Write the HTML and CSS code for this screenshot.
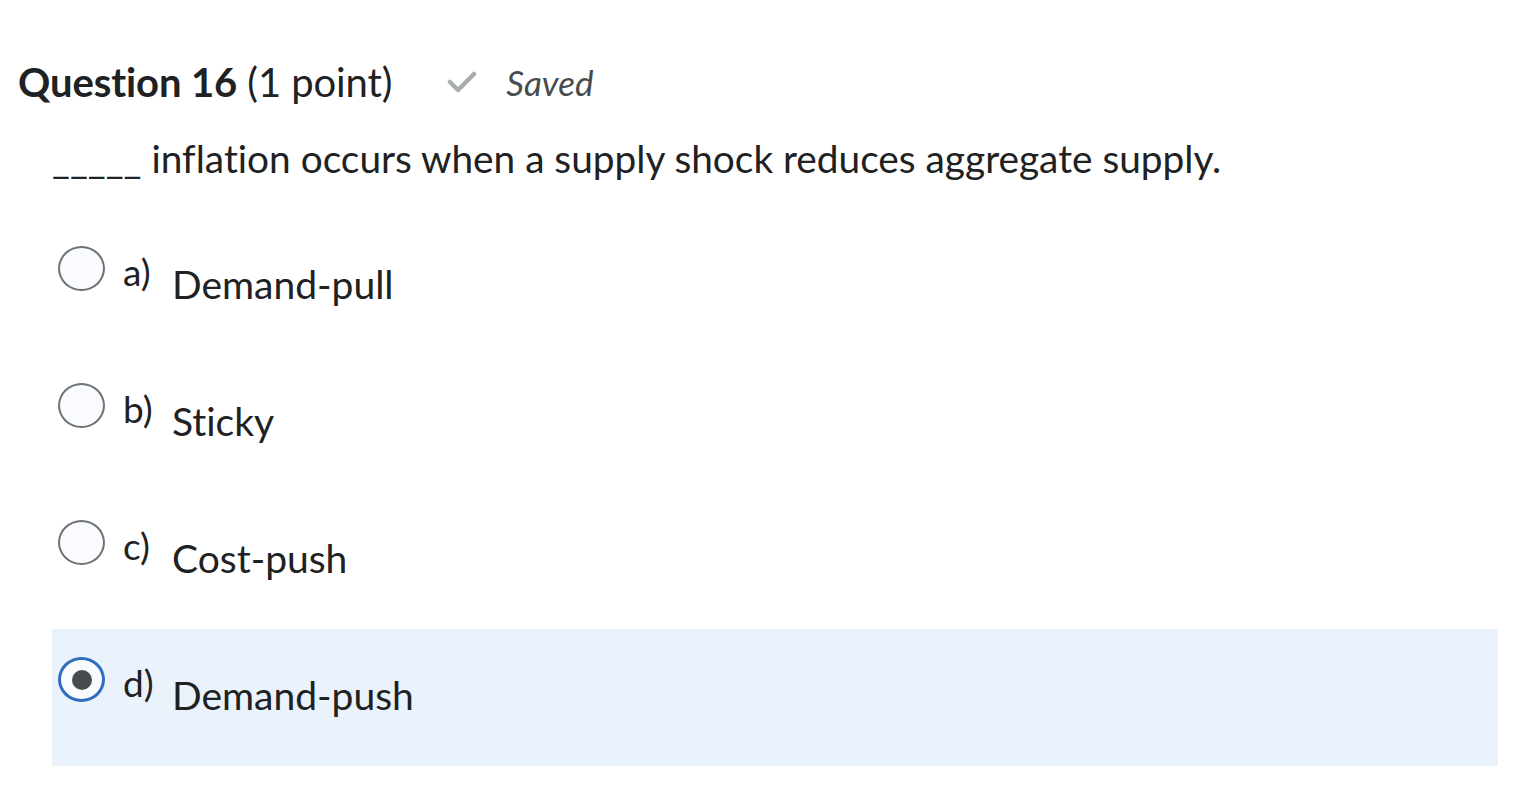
FILE: index.html
```html
<!DOCTYPE html>
<html>
<head>
<meta charset="utf-8">
<link rel="stylesheet" href="styles.css">
</head>
<body>
<div class="page">
  <div class="qhead">
    <h2 class="qtitle"><span class="qnum">Question 16</span> <span class="qpts">(1 point)</span></h2>
    <div class="saved">
      <svg class="check" width="30" height="24" viewBox="0 0 30 24"><path d="M3 12 L11 20 L27 4" fill="none" stroke="#a8adb0" stroke-width="4.5" stroke-linecap="round" stroke-linejoin="round"/></svg>
      <span>Saved</span>
    </div>
  </div>
  <p class="qtext"><span class="blank">_____</span> inflation occurs when a supply shock reduces aggregate supply.</p>
  <div class="options">
    <label class="opt">
      <span class="radio"></span>
      <span class="letter">a)</span>
      <span class="otext">Demand-pull</span>
    </label>
    <label class="opt">
      <span class="radio"></span>
      <span class="letter">b)</span>
      <span class="otext">Sticky</span>
    </label>
    <label class="opt">
      <span class="radio"></span>
      <span class="letter">c)</span>
      <span class="otext">Cost-push</span>
    </label>
    <label class="opt selected">
      <span class="radio checked"></span>
      <span class="letter">d)</span>
      <span class="otext">Demand-push</span>
    </label>
  </div>
</div>
</body>
</html>
```
FILE: styles.css
```css
html, body {
  margin: 0;
  padding: 0;
  background: #ffffff;
}
body {
  font-family: Lato, "Noto Sans", sans-serif;
  color: #202122;
  font-variant-ligatures: none;
}
.page {
  padding: 52px 40px 0 18px;
}
.qhead {
  display: flex;
  align-items: center;
  gap: 55px;
  height: 60px;
}
.qtitle {
  margin: 0;
  font-size: 40px;
  font-weight: 400;
  line-height: 60px;
  letter-spacing: -0.1px;
}
.qnum {
  font-weight: 700;
}
.saved {
  display: flex;
  align-items: center;
  gap: 29px;
  font-style: italic;
  font-size: 35px;
  color: #494c4e;
}
.qtext {
  margin: 22px 0 0 34px;
  font-size: 38.8px;
  line-height: 48px;
}
.blank {
  font-size: 39px;
}
.options {
  margin: 36px 0 0 34px;
  display: flex;
  flex-direction: column;
}
.opt {
  display: flex;
  align-items: flex-start;
  height: 137px;
  box-sizing: border-box;
  padding: 28px 0 0 6px;
}
.opt.selected {
  background: #eaf2fc;
}
.radio {
  width: 47px;
  height: 45px;
  border: 2px solid #6e7376;
  border-radius: 50%;
  background: #f9fbff;
  flex: none;
  box-sizing: border-box;
  position: relative;
}
.radio.checked {
  border: 3px solid #2d6fbe;
}
.radio.checked::after {
  content: "";
  position: absolute;
  left: 50%;
  top: 50%;
  width: 20px;
  height: 20px;
  margin: -10px 0 0 -10px;
  border-radius: 50%;
  background: #494c4e;
}
.letter {
  margin-left: 18px;
  font-size: 37px;
  line-height: 44px;
  width: 49px;
  margin-top: 4px;
}
.otext {
  font-size: 39px;
  line-height: 48px;
  margin-top: 14px;
}
```
